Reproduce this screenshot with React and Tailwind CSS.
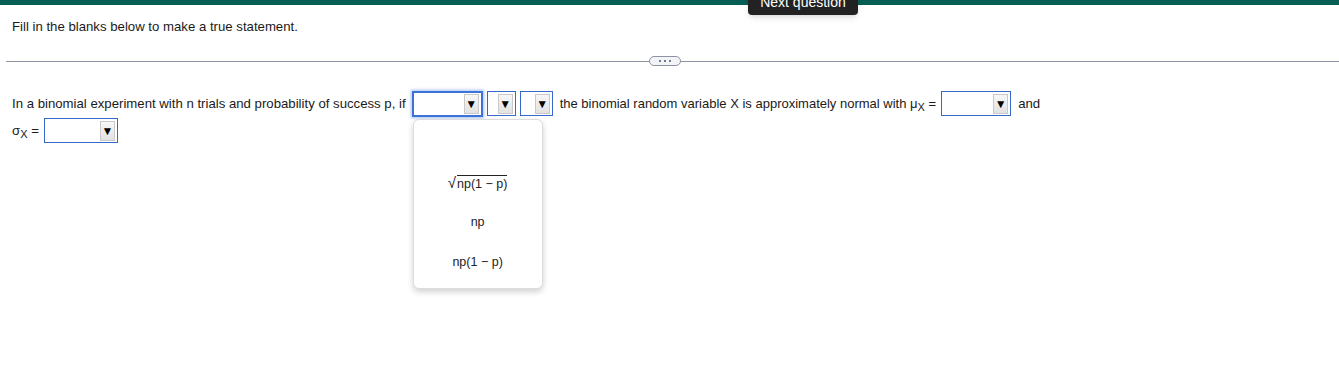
import React from "react";

function Arrow() {
    return (
        <div className="w-[15px] h-[20px] flex items-center justify-center border border-[#c9c9c9] bg-gradient-to-b from-[#f7f7f7] to-[#e2e2e2] text-[12px] leading-none text-black">
            ▼
        </div>
    );
}

function Select({ width, focused }) {
    return (
        <div
            className={
                focused
                    ? "h-[26px] flex items-center justify-end pr-[2px] bg-white border-2 border-[#3b73d9] shadow-[0_0_3px_1px_rgba(59,115,217,0.45)]"
                    : "h-[25px] flex items-center justify-end pr-[2px] bg-white border border-[#3668c9]"
            }
            style={{ width }}
        >
            <Arrow />
        </div>
    );
}

function Sub({ sym }) {
    return (
        <span>
            {sym}
            <span className="text-[11px] relative top-[3px]">X</span>
        </span>
    );
}

export default function App() {
    return (
        <div className="relative w-[1339px] h-[367px] bg-white text-[13.2px] text-[#1a1a1a] font-['Liberation_Sans',Arial,sans-serif] overflow-hidden">
            <div className="h-[5px] bg-[#075e55]" />

            {/* tooltip */}
            <div className="absolute left-[748px] top-[-10px] w-[110px] h-[25px] rounded-[4px] bg-[#222222] text-white text-[14px] flex items-center justify-center shadow-md">
                Next question
            </div>

            <div className="px-[12px] pt-[14px] leading-[16px]">Fill in the blanks below to make a true statement.</div>

            <div className="relative mt-[21px] ml-[6px] h-[10px] flex items-center">
                <div className="flex-1 h-px bg-[#8d93a3]" />
                <div className="absolute left-[643px] w-[32px] h-[10px] rounded-full border border-[#8d93a3] bg-[#f2f4f7] flex items-center justify-center gap-[3px]">
                    <span className="w-[2px] h-[2px] rounded-full bg-[#4b5060]" />
                    <span className="w-[2px] h-[2px] rounded-full bg-[#4b5060]" />
                    <span className="w-[2px] h-[2px] rounded-full bg-[#4b5060]" />
                </div>
            </div>

            <div className="px-[12px] mt-[24px]">
                <div className="flex items-center h-[27px]">
                    <span>In a binomial experiment with n trials and probability of success p, if</span>
                    <div className="relative ml-[6px]">
                        <Select width={71} focused />
                        <div className="absolute left-[1px] top-[28px] w-[130px] h-[170px] bg-white border border-[#dcdcdc] rounded-[6px] shadow-[0_3px_6px_rgba(0,0,0,0.18)] pt-[3px] flex flex-col items-center text-[12.5px] text-[#222]">
                            <div className="h-[40px]" />
                            <div className="h-[40px] flex items-center">
                                <span className="text-[15px] leading-none mr-[1px]">√</span>
                                <span className="border-t border-[#222] leading-[14px] pt-[1px] mt-[1px]">np(1 − p)</span>
                            </div>
                            <div className="h-[40px] flex items-center">np</div>
                            <div className="h-[40px] flex items-center">np(1 − p)</div>
                        </div>
                    </div>
                    <div className="ml-[4px]">
                        <Select width={29} />
                    </div>
                    <div className="ml-[4px]">
                        <Select width={33} />
                    </div>
                    <span className="ml-[7px] text-[13px]">
                        the binomial random variable X is approximately normal with <Sub sym="μ" /> =
                    </span>
                    <div className="ml-[5px]">
                        <Select width={70} />
                    </div>
                    <span className="ml-[7px]">and</span>
                </div>
                <div className="flex items-center h-[27px]">
                    <span>
                        <Sub sym="σ" /> =
                    </span>
                    <div className="ml-[5px]">
                        <Select width={74} />
                    </div>
                </div>
            </div>
        </div>
    );
}
